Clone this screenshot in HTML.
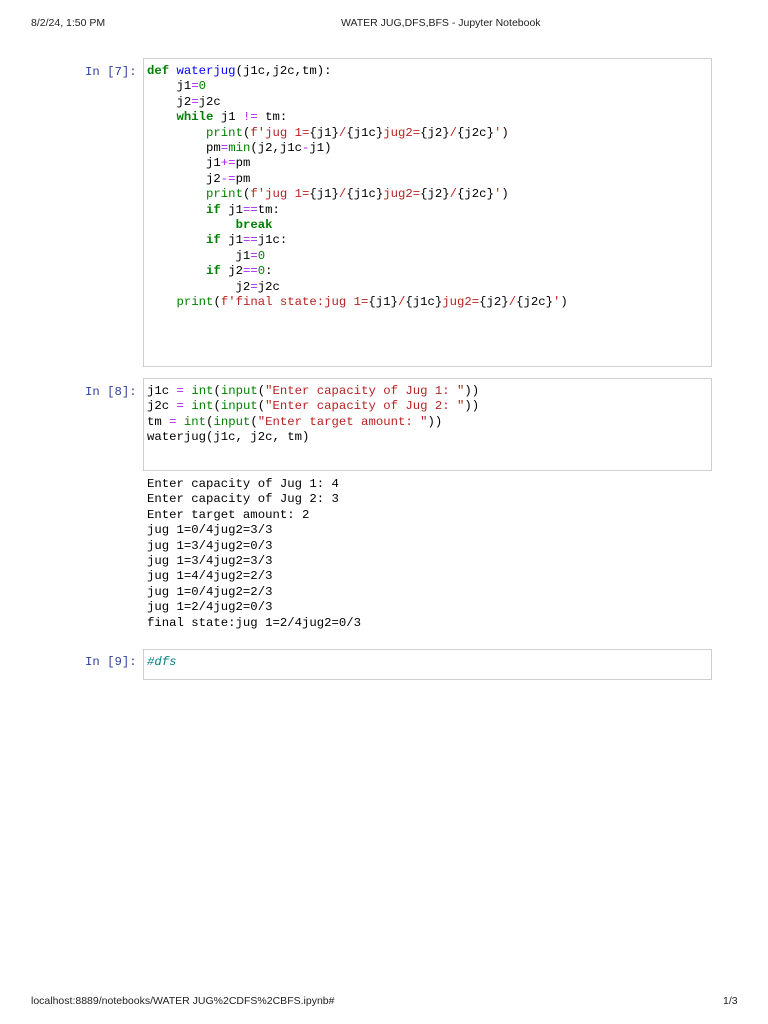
<!DOCTYPE html>
<html><head><meta charset="utf-8"><style>
body{margin:0;width:768px;height:1024px;background:#fff;position:relative;overflow:hidden;font-family:"Liberation Sans",sans-serif}
.hdr{position:absolute;font-size:10.5px;color:#222}
.cell{position:absolute;left:143px;width:567px;border:1px solid #cfcfcf;background:#fff}
.prompt{position:absolute;left:85px;font-family:"Liberation Mono",monospace;font-size:12.3px;color:#303f9f}
pre{margin:0;font-family:"Liberation Mono",monospace;font-size:12.3px;line-height:15.4px;color:#000}
.code{position:absolute;left:3px;top:5px}
.k{color:#008000;font-weight:bold}.f{color:#0000ff}.o{color:#aa22ff}.n{color:#008000}.s{color:#ba2121}.b{color:#008000}.c{color:#008080;font-style:italic}
</style></head><body>
<div class="hdr" style="left:31px;top:17px">8/2/24, 1:50 PM</div>
<div class="hdr" style="left:341px;top:17px">WATER JUG,DFS,BFS - Jupyter Notebook</div>

<div class="prompt" style="top:65px">In [7]:</div>
<div class="cell" style="top:58px;height:307px"><pre class="code"><span class="k">def</span> <span class="f">waterjug</span>(j1c,j2c,tm):
    j1<span class="o">=</span><span class="n">0</span>
    j2<span class="o">=</span>j2c
    <span class="k">while</span> j1 <span class="o">!=</span> tm:
        <span class="b">print</span>(<span class="s">f'jug 1=</span>{j1}<span class="s">/</span>{j1c}<span class="s">jug2=</span>{j2}<span class="s">/</span>{j2c}<span class="s">'</span>)
        pm<span class="o">=</span><span class="b">min</span>(j2,j1c<span class="o">-</span>j1)
        j1<span class="o">+=</span>pm
        j2<span class="o">-=</span>pm
        <span class="b">print</span>(<span class="s">f'jug 1=</span>{j1}<span class="s">/</span>{j1c}<span class="s">jug2=</span>{j2}<span class="s">/</span>{j2c}<span class="s">'</span>)
        <span class="k">if</span> j1<span class="o">==</span>tm:
            <span class="k">break</span>
        <span class="k">if</span> j1<span class="o">==</span>j1c:
            j1<span class="o">=</span><span class="n">0</span>
        <span class="k">if</span> j2<span class="o">==</span><span class="n">0</span>:
            j2<span class="o">=</span>j2c
    <span class="b">print</span>(<span class="s">f'final state:jug 1=</span>{j1}<span class="s">/</span>{j1c}<span class="s">jug2=</span>{j2}<span class="s">/</span>{j2c}<span class="s">'</span>)</pre></div>

<div class="prompt" style="top:385px">In [8]:</div>
<div class="cell" style="top:378px;height:91px"><pre class="code">j1c <span class="o">=</span> <span class="b">int</span>(<span class="b">input</span>(<span class="s">"Enter capacity of Jug 1: "</span>))
j2c <span class="o">=</span> <span class="b">int</span>(<span class="b">input</span>(<span class="s">"Enter capacity of Jug 2: "</span>))
tm <span class="o">=</span> <span class="b">int</span>(<span class="b">input</span>(<span class="s">"Enter target amount: "</span>))
waterjug(j1c, j2c, tm)</pre></div>

<pre style="position:absolute;left:147px;top:477px">Enter capacity of Jug 1: 4
Enter capacity of Jug 2: 3
Enter target amount: 2
jug 1=0/4jug2=3/3
jug 1=3/4jug2=0/3
jug 1=3/4jug2=3/3
jug 1=4/4jug2=2/3
jug 1=0/4jug2=2/3
jug 1=2/4jug2=0/3
final state:jug 1=2/4jug2=0/3</pre>

<div class="prompt" style="top:655px">In [9]:</div>
<div class="cell" style="top:649px;height:29px"><pre class="code"><span class="c">#dfs</span></pre></div>

<div class="hdr" style="left:31px;top:995px">localhost:8889/notebooks/WATER JUG%2CDFS%2CBFS.ipynb#</div>
<div class="hdr" style="left:723px;top:995px">1/3</div>
</body></html>
